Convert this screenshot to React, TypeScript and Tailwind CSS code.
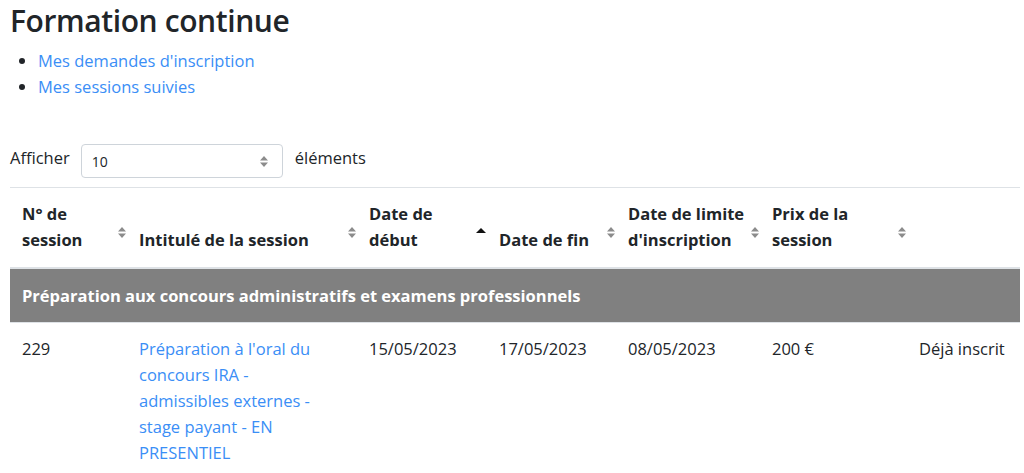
import React from "react";

const SortBoth = () => (
  <svg width="8" height="11" viewBox="0 0 8 11" className="block">
    <path d="M0 4.5 L4 0 L8 4.5Z M0 6.5 L4 11 L8 6.5Z" fill="#8c8c8c" />
  </svg>
);

const SortAsc = () => (
  <svg width="10" height="5" viewBox="0 0 10 5" className="block">
    <path d="M0 5 L5 0 L10 5Z" fill="#111111" />
  </svg>
);

type Col = { label: React.ReactNode; w: string; sort: "both" | "asc" | "none" };

const cols: Col[] = [
  { label: <>N° de<br />session</>, w: "w-[117px]", sort: "both" },
  { label: <>Intitulé de la session</>, w: "w-[230px]", sort: "both" },
  { label: <>Date de<br />début</>, w: "w-[130px]", sort: "asc" },
  { label: <>Date de fin</>, w: "w-[129px]", sort: "both" },
  { label: <>Date de limite<br />d'inscription</>, w: "w-[144px]", sort: "both" },
  { label: <>Prix de la<br />session</>, w: "w-[147px]", sort: "both" },
  { label: <></>, w: "w-[113px]", sort: "none" },
];

const td = "align-top px-[12px] pt-[13px] pb-[12px] border-t border-t-[#dee2e6]";

export default function App() {
  return (
    <div className="px-[10px] font-['Open_Sans',sans-serif] text-[16.5px] leading-[26px] text-[#212529] bg-white min-h-[473px]">
      <h2 className="text-[30px] leading-[38px] font-semibold tracking-[-0.4px] pt-[2px] mb-[8px]">Formation continue</h2>
      <ul className="list-disc pl-[28px] mb-[16px]">
        <li>
          <a className="text-[#3a8ef6]">Mes demandes d'inscription</a>
        </li>
        <li>
          <a className="text-[#3a8ef6]">Mes sessions suivies</a>
        </li>
      </ul>
      <div className="flex items-center pt-[28px] pb-[9px]">
        <span className="mt-[-6px]">Afficher</span>
        <div className="ml-[11px] w-[202px] h-[34px] border border-[#ced4da] rounded-[4px] flex items-center justify-between pl-[10px] pr-[14px] text-[14px]">
          <span className="mt-[2px]">10</span>
          <SortBoth />
        </div>
        <span className="ml-[12px] mt-[-6px]">éléments</span>
      </div>
      <table className="w-full table-fixed border-collapse">
        <colgroup>
          {cols.map((c, i) => (
            <col key={i} className={c.w} />
          ))}
        </colgroup>
        <thead>
          <tr>
            {cols.map((c, i) => (
              <th
                key={i}
                className="align-bottom text-left font-bold pl-[12px] pr-[1px] pt-[13px] pb-[14px] border-t border-t-[#dee2e6] border-b-2 border-b-[#dee2e6]"
              >
                <div className="flex items-end justify-between">
                  <span className="whitespace-nowrap">{c.label}</span>
                  {c.sort === "both" && (
                    <span className="mb-[15px] shrink-0">
                      <SortBoth />
                    </span>
                  )}
                  {c.sort === "asc" && (
                    <span className="mb-[20px] shrink-0">
                      <SortAsc />
                    </span>
                  )}
                </div>
              </th>
            ))}
          </tr>
        </thead>
        <tbody>
          <tr>
            <td colSpan={7} className="bg-[#808080] text-white font-bold px-[12px] pt-[14px] pb-[13px]">
              Préparation aux concours administratifs et examens professionnels
            </td>
          </tr>
          <tr>
            <td className={td}>229</td>
            <td className={td}>
              <a className="text-[#3a8ef6] whitespace-nowrap">
                Préparation à l'oral du
                <br />
                concours IRA -
                <br />
                admissibles externes -
                <br />
                stage payant - EN
                <br />
                PRESENTIEL
              </a>
            </td>
            <td className={td}>15/05/2023</td>
            <td className={td}>17/05/2023</td>
            <td className={td}>08/05/2023</td>
            <td className={td}>200 €</td>
            <td className={td + " whitespace-nowrap"}>Déjà inscrit</td>
          </tr>
        </tbody>
      </table>
    </div>
  );
}
